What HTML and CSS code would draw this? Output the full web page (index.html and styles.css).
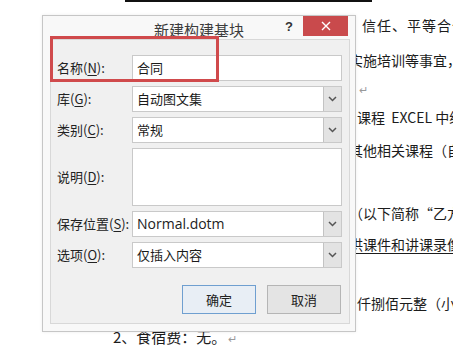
FILE: index.html
```html
<!DOCTYPE html>
<html>
<head>
<meta charset="utf-8">
<link rel="stylesheet" href="styles.css">
</head>
<body>
  <div class="page">
    <!-- document behind the dialog -->
    <div class="doc">
      <div class="rule"></div>
      <p class="line l1 at-c wide">信任、平等合作</p>
      <p class="line l2 at-a">实施培训等事宜，</p>
      <p class="line l3 at-b"><span class="mark">↵</span></p>
      <p class="line l4 at-b">课程&nbsp;&nbsp;EXCEL 中级</p>
      <p class="line l5 at-a">其他相关课程（自</p>
      <p class="line l6 at-a">（以下简称“乙方</p>
      <p class="line l7 at-a"><u>供课件和讲课录像</u></p>
      <p class="line l8 at-b">仟捌佰元整（小写</p>
      <p class="line l9 at-left">2、食宿费：无。<span class="mark">↵</span></p>
    </div>

    <!-- the dialog window -->
    <div class="dialog">
      <div class="titlebar">
        <span></span>
        <span class="title">新建构建基块</span>
        <div class="controls">
          <span class="help">?</span>
          <span class="close">
            <svg width="10" height="10" viewBox="0 0 10 10"><path d="M1 1 L9 9 M9 1 L1 9" stroke="#fff" stroke-width="1.4"/></svg>
          </span>
        </div>
      </div>

      <div class="panel">
        <div class="form">
          <label>名称(<u>N</u>):</label>
          <div class="field">合同</div>

          <label>库(<u>G</u>):</label>
          <div class="field select"><span class="value">自动图文集</span><span class="drop"><svg width="9" height="6" viewBox="0 0 9 6"><path d="M1 1 L4.5 4.5 L8 1" fill="none" stroke="#555" stroke-width="1.5"/></svg></span></div>

          <label>类别(<u>C</u>):</label>
          <div class="field select"><span class="value">常规</span><span class="drop"><svg width="9" height="6" viewBox="0 0 9 6"><path d="M1 1 L4.5 4.5 L8 1" fill="none" stroke="#555" stroke-width="1.5"/></svg></span></div>

          <label>说明(<u>D</u>):</label>
          <div class="field area"></div>

          <label>保存位置(<u>S</u>):</label>
          <div class="field select"><span class="value latin">Normal.dotm</span><span class="drop"><svg width="9" height="6" viewBox="0 0 9 6"><path d="M1 1 L4.5 4.5 L8 1" fill="none" stroke="#555" stroke-width="1.5"/></svg></span></div>

          <label>选项(<u>O</u>):</label>
          <div class="field select"><span class="value">仅插入内容</span><span class="drop"><svg width="9" height="6" viewBox="0 0 9 6"><path d="M1 1 L4.5 4.5 L8 1" fill="none" stroke="#555" stroke-width="1.5"/></svg></span></div>
        </div>

        <div class="buttons">
          <button class="btn default">确定</button>
          <button class="btn">取消</button>
        </div>
      </div>
    </div>

    <!-- annotation box drawn over the screenshot -->
    <div class="highlight"></div>
  </div>
</body>
</html>
```

FILE: styles.css
```css
html, body
{
  margin: 0;
  padding: 0;
  background: #fff;
}

.page
{
  position: relative;
  width: 453px;
  height: 347px;
  overflow: hidden;
  font-family: "Noto Sans CJK SC", sans-serif;
}

/* document text, mostly hidden by the dialog */

.doc
{
  color: #1c1c1c;
  font-size: 14px;
}

.rule
{
  margin-left: 125px;
  width: 247px;
  height: 2px;
  background: #111;
}

.line
{
  margin: 0;
  height: 20px;
  line-height: 20px;
  white-space: nowrap;
}

.wide { letter-spacing: 1px; }

.l1 { margin-top: 13px; }
.l2 { margin-top: 15px; }
.l3 { margin-top: 8px; }
.l4 { margin-top: 9px; }
.l5 { margin-top: 13px; }
.l6 { margin-top: 43px; }
.l7 { margin-top: 11px; }
.l8 { margin-top: 39px; }
.l9 { margin-top: 14px; }

.at-a { padding-left: 349px; }
.at-b { padding-left: 357px; }
.at-c { padding-left: 362px; }
.at-left { padding-left: 113px; font-size: 15px; }

.line u { text-underline-offset: 3px; }

.mark
{
  color: #999;
  font-size: 11px;
  margin-left: 2px;
}

/* dialog */

.dialog
{
  position: absolute;
  left: 42px;
  top: 15px;
  width: 314px;
  height: 317px;
  box-sizing: border-box;
  border: 1px solid #c6c6c6;
  background: #f8f8f8;
  display: flex;
  flex-direction: column;
  box-shadow: 0 0 3px rgba(0,0,0,0.08);
}

.titlebar
{
  height: 23px;
  display: grid;
  grid-template-columns: 1fr auto 1fr;
}

.title
{
  padding-top: 4px;
  font-size: 15px;
  line-height: 20px;
  color: #3c3c3c;
}

.controls
{
  justify-self: end;
  display: flex;
  align-items: flex-start;
  margin-right: 7px;
}

.help
{
  font-family: "Liberation Sans", sans-serif;
  font-weight: bold;
  font-size: 13px;
  color: #333;
  margin: 3px 10px 0 0;
}

.close
{
  width: 45px;
  height: 20px;
  background: #c94a4c;
  display: flex;
  align-items: center;
  justify-content: center;
}

.panel
{
  flex: 1;
  margin: 0 5px 7px 7px;
  border: 1px solid #d8d8d8;
  background: #f0f0f0;
  padding: 15px 7px 0 6px;
}

.form
{
  display: grid;
  grid-template-columns: 75px 1fr;
  grid-template-rows: 26px 26px 26px 58px 26px 26px;
  row-gap: 5px;
  align-items: center;
}

.form label
{
  font-size: 13px;
  line-height: 16px;
  color: #222;
}

.form label u { text-underline-offset: 2px; }

.field
{
  box-sizing: border-box;
  height: 100%;
  background: #fff;
  border: 1px solid #c9c9c9;
  font-size: 13px;
  line-height: 24px;
  color: #1a1a1a;
  padding-left: 4px;
}

.select
{
  display: flex;
  padding-right: 0;
}

.select .value { flex: 1; }

.latin
{
  font-family: "Open Sans", sans-serif;
  font-size: 14px;
  color: #222;
}

.drop
{
  width: 17px;
  background: #e3e3e3;
  border-left: 1px solid #c3c3c3;
  display: flex;
  align-items: center;
  justify-content: center;
}

.buttons
{
  display: flex;
  justify-content: flex-end;
  gap: 11px;
  margin-top: 17px;
  padding-right: 1px;
}

.btn
{
  width: 74px;
  height: 29px;
  font-family: "Noto Sans CJK SC", sans-serif;
  font-size: 13px;
  color: #222;
  background: #e4e4e4;
  border: 1px solid #b5b5b5;
  padding: 0;
}

.btn.default
{
  background: #e8eef5;
  border-color: #6f9fd0;
}

/* red annotation */

.highlight
{
  position: absolute;
  left: 50px;
  top: 36px;
  width: 169px;
  height: 46px;
  box-sizing: border-box;
  border: 3px solid #d04a4c;
}
```
